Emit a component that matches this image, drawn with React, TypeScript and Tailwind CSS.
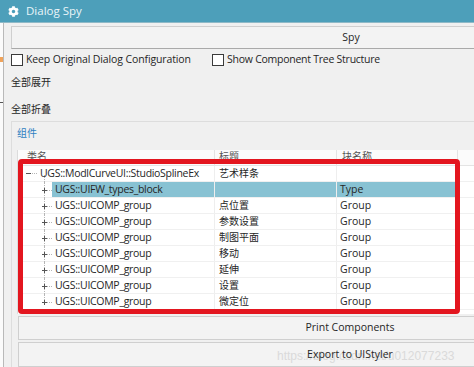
import { FaCog } from "react-icons/fa";

const FONT = '"Open Sans", "Noto Sans CJK SC", sans-serif';

type Row = { name: string; title: string; block: string; selected?: boolean };

const rows: Row[] = [
  { name: "UGS::UIFW_types_block", title: "", block: "Type", selected: true },
  { name: "UGS::UICOMP_group", title: "点位置", block: "Group" },
  { name: "UGS::UICOMP_group", title: "参数设置", block: "Group" },
  { name: "UGS::UICOMP_group", title: "制图平面", block: "Group" },
  { name: "UGS::UICOMP_group", title: "移动", block: "Group" },
  { name: "UGS::UICOMP_group", title: "延伸", block: "Group" },
  { name: "UGS::UICOMP_group", title: "设置", block: "Group" },
  { name: "UGS::UICOMP_group", title: "微定位", block: "Group" },
];

function Checkbox() {
  return <div className="w-[12px] h-[12px] border border-[#3a3a3a] bg-white shrink-0" />;
}

function Plus() {
  return (
    <svg width="5" height="5" viewBox="0 0 5 5" className="absolute left-[24px] top-[6px]">
      <rect x="0" y="2" width="5" height="1" fill="#555" />
      <rect x="2" y="0" width="1" height="5" fill="#555" />
    </svg>
  );
}

export default function App() {
  return (
    <div
      className="relative w-[474px] h-[367px] overflow-hidden bg-[#f0f0f0] flex flex-col text-[#262626]"
      style={{ fontFamily: FONT }}
    >
      {/* title bar */}
      <div className="h-[23px] shrink-0 bg-[#4d9fba] flex items-center pl-[8px] gap-[7px] border-b border-[#8fb9c7]">
        <FaCog className="w-[11px] h-[11px] text-white" />
        <span className="text-[11.5px] text-[#eaf5f9] leading-none">Dialog Spy</span>
      </div>

      <div className="flex flex-1 min-h-0">
        {/* background window strip */}
        <div className="w-[4px] shrink-0 bg-[#fbfbfb] border-r border-[#b9b9b9] flex flex-col">
          <div className="h-[34px]" />
          <div className="h-[5px] bg-[#f0a35a]" />
          <div className="h-[40px]" />
          <div className="h-[1px] bg-[#555555]" />
        </div>

        <div className="flex-1 min-w-0 flex flex-col pl-[7px]">
          {/* Spy button */}
          <div className="mt-[3px] h-[23px] w-[680px] shrink-0 bg-[#f3f3f3] border border-[#cfcfcf] border-b-[#a9a9a9] flex items-center justify-center text-[10.5px]">
            Spy
          </div>

          {/* checkboxes */}
          <div className="mt-[4px] h-[13px] flex items-center text-[10.5px] tracking-[-0.12px] shrink-0">
            <div className="w-[201px] flex items-center gap-[3px] shrink-0">
              <Checkbox />
              <span className="whitespace-nowrap">Keep Original Dialog Configuration</span>
            </div>
            <div className="flex items-center gap-[3px]">
              <Checkbox />
              <span className="whitespace-nowrap tracking-[-0.25px]">Show Component Tree Structure</span>
            </div>
          </div>

          <div className="mt-[9px] h-[14px] leading-[14px] text-[10px] shrink-0">全部展开</div>
          <div className="mt-[13px] h-[14px] leading-[14px] text-[10px] shrink-0">全部折叠</div>

          {/* group box */}
          <div className="mt-[5px] flex-1 border-l border-t border-[#dddddd] pl-[5px] flex flex-col">
            <div className="mt-[4px] h-[14px] leading-[14px] text-[10px] text-[#2f7fc1] shrink-0">组件</div>

            {/* table */}
            <div className="mt-[10px] w-[480px] bg-white border-l border-[#dcdcdc] shrink-0 pb-[4px]">
              <div className="h-[16px] flex text-[10px] text-[#555555] border-b border-[#e4e4e4] bg-[#fbfbfb]">
                <div className="w-[197px] pl-[9px] leading-[12px] border-r border-[#e4e4e4]">类名</div>
                <div className="w-[122px] pl-[4px] leading-[12px] border-r border-[#e4e4e4]">标题</div>
                <div className="w-[121px] pl-[5px] leading-[12px] border-r border-[#e4e4e4]">块名称</div>
                <div className="flex-1" />
              </div>

              {/* root row */}
              <div className="h-[16px] flex text-[10.5px] tracking-[-0.3px] border-b border-[#f0f0f0]">
                <div className="w-[197px] flex items-center relative border-r border-[#eeeeee]">
                  <div className="ml-[8px] w-[5px] h-[1px] bg-[#555555]" />
                  <div className="ml-[1px] w-[5px] border-t border-dotted border-[#b5b5b5]" />
                  <span className="ml-[3px] whitespace-nowrap">UGS::ModlCurveUI::StudioSplineEx</span>
                  <div className="absolute left-[26px] top-[9px] bottom-[-1px] border-l border-dotted border-[#b5b5b5]" />
                </div>
                <div className="w-[122px] pl-[4px] flex items-center border-r border-[#eeeeee] text-[10px] tracking-normal">
                  艺术样条
                </div>
                <div className="w-[121px] border-r border-[#eeeeee]" />
              </div>

              {rows.map((r, i) => {
                const last = i === rows.length - 1;
                return (
                  <div key={i} className="h-[16px] flex text-[10.5px] border-b border-[#f0f0f0]">
                    <div className="w-[34px] relative shrink-0">
                      <div
                        className={
                          last
                            ? "absolute left-[26px] top-0 h-[8px] border-l border-dotted border-[#b5b5b5]"
                            : "absolute left-[26px] top-0 bottom-[-1px] border-l border-dotted border-[#b5b5b5]"
                        }
                      />
                      <div className="absolute left-[29px] top-[8px] w-[5px] border-t border-dotted border-[#b5b5b5]" />
                      <Plus />
                    </div>
                    <div className={r.selected ? "w-[406px] flex bg-[#88c2d3]" : "w-[406px] flex"}>
                      <div className="w-[163px] pl-[3px] flex items-center border-r border-[#eeeeee] whitespace-nowrap tracking-[-0.3px]">
                        {r.name}
                      </div>
                      <div className="w-[122px] pl-[4px] flex items-center border-r border-[#eeeeee] text-[10px]">
                        {r.title}
                      </div>
                      <div className="w-[121px] pl-[3px] flex items-center border-r border-[#eeeeee]">
                        {r.block}
                      </div>
                    </div>
                  </div>
                );
              })}
            </div>

            {/* buttons */}
            <div className="mt-[2px] ml-[1px] h-[24px] w-[664px] shrink-0 bg-[#f3f3f3] border border-[#cfcfcf] flex items-center justify-center text-[10.5px]">
              Print Components
            </div>
            <div className="mt-[2px] ml-[1px] h-[25px] w-[664px] shrink-0 bg-[#f3f3f3] border border-[#cfcfcf] flex items-center justify-center text-[10.5px] relative">
              <span
                className="absolute left-[258px] top-[4px] text-[12px] text-[#dadada] whitespace-nowrap"
                style={{ fontFamily: '"Liberation Sans", sans-serif' }}
              >
                https://blog.csdn.net/u012077233
              </span>
              <span className="relative">Export to UIStyler</span>
            </div>
          </div>
        </div>
      </div>

      {/* red highlight box */}
      <div className="absolute left-[18px] top-[159px] w-[442px] h-[155px] border-[5px] border-[#e3161f] rounded-[4px] pointer-events-none" />
    </div>
  );
}
